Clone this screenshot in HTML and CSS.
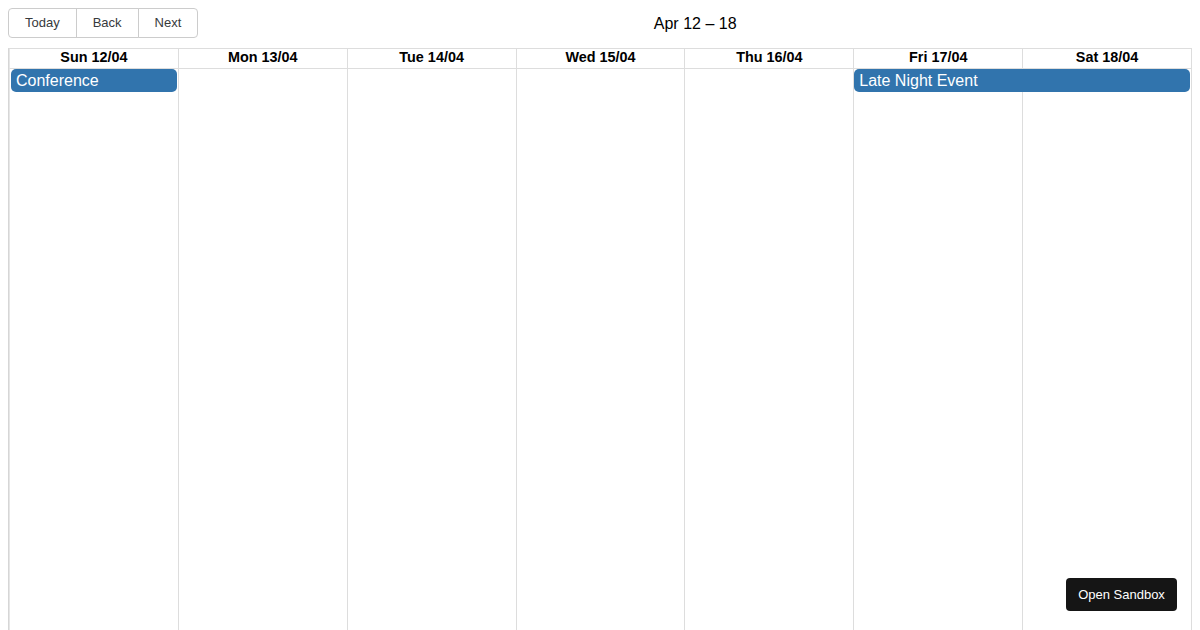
FILE: index.html
```html
<!DOCTYPE html>
<html>
<head>
<meta charset="utf-8">
<link rel="stylesheet" href="styles.css">
</head>
<body>
<div class="toolbar">
  <div class="btn-group">
    <button class="tb-btn">Today</button>
    <button class="tb-btn">Back</button>
    <button class="tb-btn">Next</button>
  </div>
  <div class="tb-label">Apr 12 – 18</div>
</div>
<div class="calendar">
  <div class="hdr c1">Sun 12/04</div>
  <div class="hdr c2">Mon 13/04</div>
  <div class="hdr c3">Tue 14/04</div>
  <div class="hdr c4">Wed 15/04</div>
  <div class="hdr c5">Thu 16/04</div>
  <div class="hdr c6">Fri 17/04</div>
  <div class="hdr c7">Sat 18/04</div>
  <div class="bg c1"></div>
  <div class="bg c2"></div>
  <div class="bg c3"></div>
  <div class="bg c4"></div>
  <div class="bg c5"></div>
  <div class="bg c6"></div>
  <div class="bg c7"></div>
  <div class="event ev-conf">Conference</div>
  <div class="event ev-late">Late Night Event</div>
</div>
<button class="sandbox">Open Sandbox</button>
</body>
</html>
```
FILE: styles.css
```css
html, body {
  margin: 0;
  padding: 0;
  background: #fff;
}
body {
  margin: 8px;
  font-family: "Liberation Sans", Arial, Helvetica, sans-serif;
  color: #373a3c;
  overflow: hidden;
  height: 622px;
}
.toolbar {
  display: flex;
  align-items: center;
  height: 30px;
  margin-bottom: 10px;
}
.btn-group {
  display: flex;
  flex: 0 0 auto;
}
.tb-btn {
  font-family: "Liberation Sans", Arial, sans-serif;
  font-size: 13px;
  color: #373a3c;
  background: #fff;
  border: 1px solid #ccc;
  padding: 0 16px;
  height: 30px;
  line-height: 28px;
  margin: 0;
  margin-left: -1px;
  border-radius: 0;
}
.tb-btn:first-child {
  margin-left: 0;
  border-radius: 4px 0 0 4px;
}
.tb-btn:last-child {
  border-radius: 0 4px 4px 0;
}
.tb-label {
  flex: 1 1 auto;
  text-align: center;
  font-size: 16px;
  color: #000;
  padding: 2px 10px 0;
}
.calendar {
  display: grid;
  grid-template-columns: repeat(7, 1fr);
  grid-template-rows: 20px 25px 1fr;
  border: 1px solid #ddd;
  border-left: 1px solid #d6d6d6;
  height: 620px;
}
.c1 { grid-column: 1; }
.c2 { grid-column: 2; }
.c3 { grid-column: 3; }
.c4 { grid-column: 4; }
.c5 { grid-column: 5; }
.c6 { grid-column: 6; }
.c7 { grid-column: 7; }
.hdr {
  grid-row: 1;
  font-size: 14.4px;
  font-weight: bold;
  color: #000;
  text-align: center;
  line-height: 17px;
  border-bottom: 1px solid #ddd;
  border-left: 1px solid #ddd;
  white-space: nowrap;
  overflow: hidden;
}
.hdr.c1 { border-left: 1px solid #e6e6e6; }
.bg {
  grid-row: 2 / 4;
  border-left: 1px solid #ddd;
}
.bg.c1 { border-left: 1px solid #e6e6e6; }
.event {
  grid-row: 2;
  align-self: start;
  margin: 0 1px 0 1px;
  background: #3174ad;
  color: #fff;
  font-size: 16px;
  line-height: 19px;
  padding: 2px 5px;
  border-radius: 5px;
  white-space: nowrap;
  overflow: hidden;
  position: relative;
  z-index: 1;
}
.ev-conf { grid-column: 1 / 2; margin-left: 2px; }
.ev-late { grid-column: 6 / 8; }
.sandbox {
  position: fixed;
  right: 23px;
  bottom: 19px;
  width: 111px;
  height: 33px;
  background: #151515;
  color: #fff;
  border: none;
  border-radius: 4px;
  font-family: "Liberation Sans", Arial, sans-serif;
  font-size: 13px;
  padding: 0;
  z-index: 5;
}
```
